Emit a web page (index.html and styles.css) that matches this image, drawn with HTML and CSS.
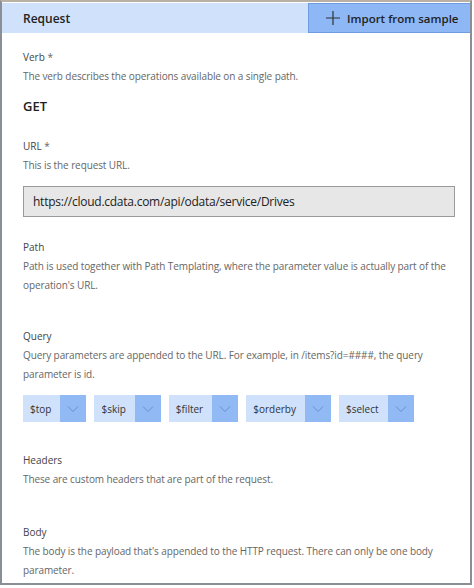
FILE: index.html
```html
<!DOCTYPE html>
<html lang="en">
<head>
    <meta charset="UTF-8">
    <title>Request</title>
    <link rel="stylesheet" href="styles.css">
</head>
<body>
    <div class="panel">
        <!-- Header bar -->
        <div class="panel-header">
            <span class="panel-title">Request</span>
            <button class="import-btn">
                <svg width="14" height="14" viewBox="0 0 14 14"><path d="M7 0v14M0 7h14" stroke="#333" stroke-width="1.2" fill="none"/></svg>
                Import from sample
            </button>
        </div>

        <div class="panel-body">
            <div class="field field-verb">
                <div class="label">Verb <span class="req">*</span></div>
                <div class="desc">The verb describes the operations available on a single path.</div>
                <div class="verb">GET</div>
            </div>

            <div class="field field-url">
                <div class="label">URL <span class="req">*</span></div>
                <div class="desc">This is the request URL.</div>
                <div class="url-box">https://cloud.cdata.com/api/odata/service/Drives</div>
            </div>

            <div class="field">
                <div class="label">Path</div>
                <div class="desc">Path is used together with Path Templating, where the parameter value is actually part of the operation's URL.</div>
            </div>

            <div class="field field-query">
                <div class="label">Query</div>
                <div class="desc">Query parameters are appended to the URL. For example, in /items?id=####, the query parameter is id.</div>
                <div class="chips">
                    <div class="chip"><span class="chip-label">$top</span><span class="chip-arrow"><svg width="12" height="8" viewBox="0 0 12 8"><path d="M1 1.5l5 5 5-5" stroke="#6a90d2" stroke-width="1" fill="none"/></svg></span></div>
                    <div class="chip"><span class="chip-label">$skip</span><span class="chip-arrow"><svg width="12" height="8" viewBox="0 0 12 8"><path d="M1 1.5l5 5 5-5" stroke="#6a90d2" stroke-width="1" fill="none"/></svg></span></div>
                    <div class="chip"><span class="chip-label">$filter</span><span class="chip-arrow"><svg width="12" height="8" viewBox="0 0 12 8"><path d="M1 1.5l5 5 5-5" stroke="#6a90d2" stroke-width="1" fill="none"/></svg></span></div>
                    <div class="chip"><span class="chip-label">$orderby</span><span class="chip-arrow"><svg width="12" height="8" viewBox="0 0 12 8"><path d="M1 1.5l5 5 5-5" stroke="#6a90d2" stroke-width="1" fill="none"/></svg></span></div>
                    <div class="chip"><span class="chip-label">$select</span><span class="chip-arrow"><svg width="12" height="8" viewBox="0 0 12 8"><path d="M1 1.5l5 5 5-5" stroke="#6a90d2" stroke-width="1" fill="none"/></svg></span></div>
                </div>
            </div>

            <div class="field field-headers">
                <div class="label">Headers</div>
                <div class="desc">These are custom headers that are part of the request.</div>
            </div>

            <div class="field">
                <div class="label">Body</div>
                <div class="desc">The body is the payload that's appended to the HTTP request. There can only be one body parameter.</div>
            </div>
        </div>
    </div>
</body>
</html>
```

FILE: styles.css
```css
body {
    margin: 0;
    background-color: #fff;
    font-family: "Open Sans", "Noto Sans", sans-serif;
}
.panel {
    width: 468px;
    height: 581px;
    border: 2px solid #8a8f96;
    border-top-color: #b9b2a4;
    overflow: hidden;
    background: #fff;
}
/* Header */
.panel-header {
    display: flex;
    align-items: center;
    justify-content: space-between;
    height: 30px;
    margin-top: 1px;
    background-color: #cfe1fb;
}
.panel-title {
    padding-left: 21px;
    font-size: 12px;
    font-weight: 600;
    color: #222;
}
.import-btn {
    display: flex;
    align-items: center;
    gap: 7px;
    height: 30px;
    width: 162px;
    padding: 0 0 0 17px;
    background-color: #8db7f5;
    border: 1px solid #6f9ce2;
    border-right: none;
    font-family: inherit;
    font-size: 11.5px;
    font-weight: 600;
    color: #222;
}
/* Body */
.panel-body {
    padding: 15px 16px 0 21px;
}
.field {
    margin-bottom: 24px;
}
.field-verb {
    margin-bottom: 22px;
}
.field-url {
    margin-bottom: 21px;
}
.label {
    font-size: 10px;
    line-height: 19px;
    color: #444;
}
.req {
    color: #666;
}
.desc {
    font-size: 10px;
    line-height: 19px;
    letter-spacing: -0.1px;
    color: #666;
}
.verb {
    margin-top: 11px;
    font-size: 13px;
    font-weight: 600;
    color: #222;
}
.url-box {
    margin-top: 11px;
    width: 432px;
    height: 31px;
    line-height: 29px;
    box-sizing: border-box;
    padding-left: 9px;
    background-color: #e7e7e7;
    border: 1px solid #9a9a9a;
    font-size: 12px;
    letter-spacing: -0.25px;
    color: #222;
}
.field-query {
    margin-top: 32px;
    margin-bottom: 29px;
}
.field-headers {
    margin-bottom: 34px;
}
.chips {
    display: flex;
    gap: 8px;
    margin-top: 11px;
}
.chip {
    display: flex;
    height: 27px;
}
.chip-label {
    display: flex;
    align-items: center;
    padding: 0 9px 0 7px;
    background-color: #cfe1fb;
    font-size: 10px;
    color: #333;
}
.chip-arrow {
    display: flex;
    align-items: center;
    justify-content: center;
    width: 26px;
    background-color: #91b9f4;
}
```
